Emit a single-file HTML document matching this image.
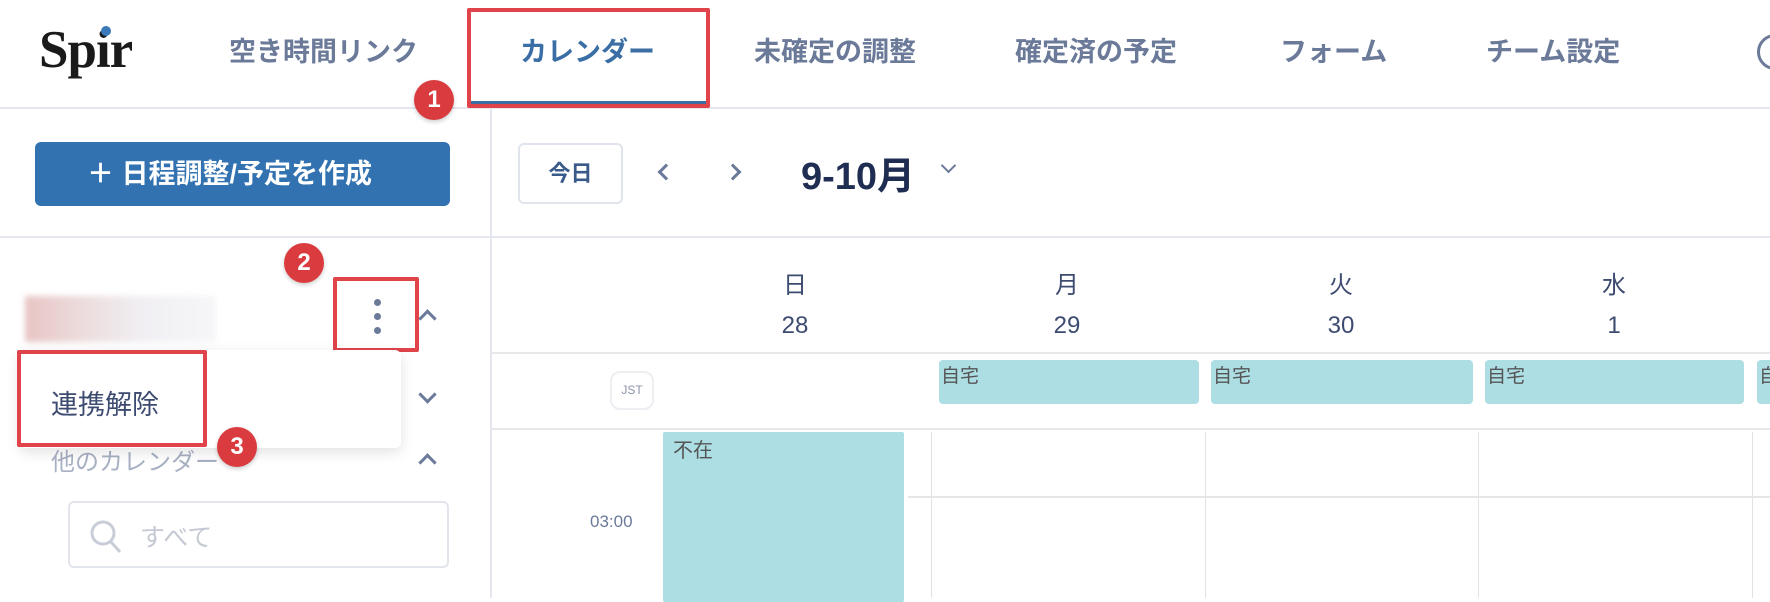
<!DOCTYPE html>
<html><head><meta charset="utf-8"><style>
*{margin:0;padding:0;box-sizing:border-box}
body{width:1770px;height:598px;overflow:hidden;background:#fff;font-family:"Liberation Sans","Noto Sans CJK JP",sans-serif;position:relative;color:#3d4b70}
.a{position:absolute}
.nav{position:absolute;top:33px;font-size:27px;color:#6b7a99;font-weight:bold;white-space:nowrap;line-height:38px}
.red{position:absolute;border:4px solid #e0434a;border-radius:2px}
.badge{position:absolute;width:40px;height:40px;border-radius:50%;background:#d93b3f;color:#fff;font-weight:bold;font-size:24px;text-align:center;line-height:40px;box-shadow:0 2px 4px rgba(0,0,0,.2)}
.hl{position:absolute;height:2px;background:#e4e7ef}
.vl{position:absolute;width:1px;background:#e2e2e2}
.day{position:absolute;width:60px;text-align:center;font-size:24px;color:#3d4b70}
.ev{position:absolute;background:#addee4;border-radius:4px;font-size:19px;color:#555;padding:6px 2px;line-height:22px;white-space:nowrap;overflow:hidden}
.chev{position:absolute;width:13px;height:13px;border-left:3px solid #6b7a99;border-top:3px solid #6b7a99}
</style></head><body>
<div class="a" style="left:39px;top:20px;font-family:'Liberation Serif',serif;font-weight:bold;font-size:53px;color:#1a1a1a;letter-spacing:-1px">Spir</div>
<div class="a" style="left:101px;top:26px;width:10px;height:10px;border-radius:50%;background:#3a7ab8"></div>
<div class="nav" style="left:229px">空き時間リンク</div>
<div class="nav" style="left:520px;color:#3a6ea5">カレンダー</div>
<div class="nav" style="left:754px">未確定の調整</div>
<div class="nav" style="left:1015px">確定済の予定</div>
<div class="nav" style="left:1280px">フォーム</div>
<div class="nav" style="left:1486px">チーム設定</div>
<div class="a" style="left:1757px;top:34px;width:36px;height:36px;border-radius:50%;border:3px solid #6b7a99"></div>
<div class="a" style="left:471px;top:101px;width:235px;height:4px;background:#3a6ea5"></div>
<div class="hl" style="left:0;top:107px;width:1770px"></div>
<div class="red" style="left:467px;top:8px;width:243px;height:100px"></div>
<div class="badge" style="left:414px;top:80px">1</div>
<div class="vl" style="left:490px;top:108px;height:490px;background:#e4e7ef;width:2px"></div>
<div class="a" style="left:35px;top:142px;width:415px;height:64px;background:#3272b0;border-radius:6px;color:#fff;font-size:27px;font-weight:bold;line-height:64px;padding-left:52px;white-space:nowrap">＋ 日程調整/予定を作成</div>
<div class="hl" style="left:0;top:236px;width:1770px"></div>
<div class="a" style="left:25px;top:296px;width:191px;height:46px;background:linear-gradient(90deg,#e8c4c4 0%,#ecdcdc 30%,#f0eef2 60%,#f6f6f8 100%);filter:blur(3px)"></div>
<div class="a" style="left:374px;top:299px;width:7px;height:7px;border-radius:50%;background:#6b7a99"></div>
<div class="a" style="left:374px;top:313px;width:7px;height:7px;border-radius:50%;background:#6b7a99"></div>
<div class="a" style="left:374px;top:327px;width:7px;height:7px;border-radius:50%;background:#6b7a99"></div>
<div class="chev" style="left:421px;top:312px;transform:rotate(45deg)"></div>
<div class="red" style="left:333px;top:277px;width:86px;height:75px"></div>
<div class="badge" style="left:284px;top:243px">2</div>
<div class="a" style="left:51px;top:442px;font-size:24px;color:#a8b0c4">他のカレンダー</div>
<div class="chev" style="left:421px;top:456px;transform:rotate(45deg)"></div>
<div class="a" style="left:20px;top:350px;width:381px;height:98px;background:#fff;border-radius:6px;box-shadow:0 4px 14px rgba(0,0,0,.12)"></div>
<div class="a" style="left:51px;top:383px;font-size:27px;color:#3d4b70">連携解除</div>
<div class="chev" style="left:421px;top:388px;transform:rotate(225deg)"></div>
<div class="red" style="left:17px;top:350px;width:190px;height:97px"></div>
<div class="badge" style="left:217px;top:427px">3</div>
<div class="a" style="left:68px;top:501px;width:381px;height:67px;border:2px solid #e2e5ec;border-radius:6px"></div>
<svg class="a" style="left:88px;top:518px" width="36" height="40" viewBox="0 0 36 40"><circle cx="15" cy="15" r="11" fill="none" stroke="#c8cdd8" stroke-width="3"/><line x1="23" y1="24" x2="32" y2="34" stroke="#c8cdd8" stroke-width="3"/></svg>
<div class="a" style="left:140px;top:518px;font-size:25px;color:#c4c9d4">すべて</div>
<div class="a" style="left:518px;top:143px;width:105px;height:61px;border:2px solid #e0e4ec;border-radius:6px;text-align:center;line-height:57px;font-size:22px;font-weight:bold;color:#3a5a8a">今日</div>
<div class="chev" style="left:660px;top:166px;transform:rotate(-45deg);width:12px;height:12px;border-color:#6b7a99"></div>
<div class="chev" style="left:727px;top:166px;transform:rotate(135deg);width:12px;height:12px"></div>
<div class="a" style="left:801px;top:145px;font-size:38px;font-weight:bold;color:#1f2d52">9-10月</div>
<div class="chev" style="left:943px;top:160px;transform:rotate(225deg);width:11px;height:11px;border-width:2.5px"></div>
<div class="day" style="left:765px;top:265px">日</div>
<div class="day" style="left:1037px;top:265px">月</div>
<div class="day" style="left:1311px;top:265px">火</div>
<div class="day" style="left:1584px;top:265px">水</div>
<div class="day" style="left:765px;top:312px">28</div>
<div class="day" style="left:1037px;top:312px">29</div>
<div class="day" style="left:1311px;top:312px">30</div>
<div class="day" style="left:1584px;top:312px">1</div>
<div class="hl" style="left:492px;top:352px;width:1278px;background:#e8e8ea"></div>
<div class="a" style="left:610px;top:371px;width:44px;height:39px;border:2px solid #eceef2;border-radius:10px;font-size:12px;color:#8a93a8;text-align:center;line-height:35px">JST</div>
<div class="ev" style="left:939px;top:360px;width:260px;height:44px">自宅</div>
<div class="ev" style="left:1211px;top:360px;width:262px;height:44px">自宅</div>
<div class="ev" style="left:1485px;top:360px;width:259px;height:44px">自宅</div>
<div class="ev" style="left:1757px;top:360px;width:30px;height:44px">自宅</div>
<div class="hl" style="left:492px;top:428px;width:1278px;background:#e8e8ea"></div>
<div class="vl" style="left:931px;top:432px;height:166px"></div>
<div class="vl" style="left:1205px;top:432px;height:166px"></div>
<div class="vl" style="left:1478px;top:432px;height:166px"></div>
<div class="vl" style="left:1752px;top:432px;height:166px"></div>
<div class="hl" style="left:908px;top:496px;width:862px;background:#e6e6e6"></div>
<div class="ev" style="left:663px;top:432px;width:241px;height:170px;border-radius:2px;padding:8px 10px;font-size:20px">不在</div>
<div class="a" style="left:590px;top:512px;font-size:17px;color:#6b7a99">03:00</div>
</body></html>
